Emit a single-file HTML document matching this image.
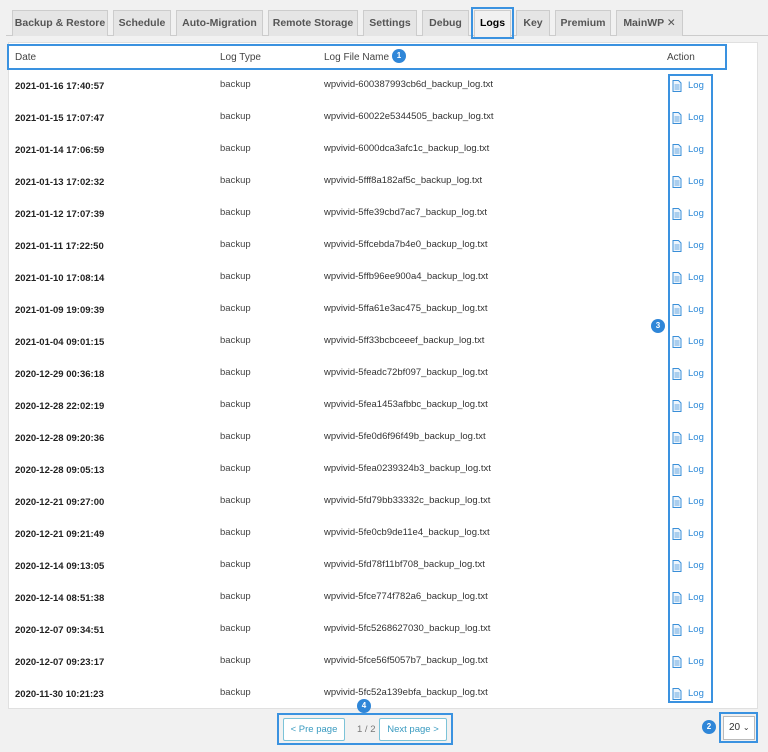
<!DOCTYPE html>
<html><head><meta charset="utf-8"><style>
*{box-sizing:border-box;margin:0;padding:0}
body{width:768px;height:752px;background:#f1f1f1;font-family:"Liberation Sans",sans-serif;position:relative;overflow:hidden;color:#333}
.tabline{position:absolute;left:6px;right:0;top:35px;height:1px;background:#ccc}
.tab{position:absolute;top:10px;height:26px;background:#e5e5e5;border:1px solid #ccc;border-bottom:none;font-size:10.5px;font-weight:bold;color:#555;text-align:center;line-height:25px;white-space:nowrap;overflow:hidden}
.tab.act{background:#f1f1f1;color:#000;height:27px}
.panel{position:absolute;left:8px;top:42px;width:750px;height:667px;background:#fff;border:1px solid #e0e0e0}
.hl{position:absolute;border:2px solid #3a92e0}
.hdr{position:absolute;top:52px;font-size:10px;color:#444}
.row{position:absolute;left:0;width:768px;height:32px;font-size:9.5px}
.row .d{position:absolute;left:15px;top:9px;font-weight:bold;color:#222}
.row .t{position:absolute;left:220px;top:7px;color:#444}
.row .f{position:absolute;left:324px;top:7px;color:#333}
.row .l{position:absolute;left:688px;top:8px;color:#2e8ad8}
.row svg{position:absolute;left:672px;top:8px}
.badge{position:absolute;width:14px;height:14px;border-radius:50%;background:#2f86d8;color:#fff;font-size:8px;font-weight:bold;text-align:center;line-height:14px}
.btn{position:absolute;top:718px;height:23px;border:1px solid #7cc3d8;border-radius:2px;background:#fff;font-size:9.5px;color:#3a9bc0;text-align:center;line-height:21px}
</style></head><body>
<div class="tabline"></div>
<div class="tab" style="left:12px;width:96px">Backup &amp; Restore</div>
<div class="tab" style="left:113px;width:58px">Schedule</div>
<div class="tab" style="left:176px;width:87px">Auto-Migration</div>
<div class="tab" style="left:268px;width:90px">Remote Storage</div>
<div class="tab" style="left:363px;width:54px">Settings</div>
<div class="tab" style="left:422px;width:47px">Debug</div>
<div class="tab act" style="left:474px;width:37px">Logs</div>
<div class="tab" style="left:516px;width:34px">Key</div>
<div class="tab" style="left:555px;width:56px">Premium</div>
<div class="tab" style="left:616px;width:67px">MainWP <span style="font-weight:normal">✕</span></div>
<div class="hl" style="left:471px;top:7px;width:43px;height:32px"></div>
<div class="panel"></div>
<div class="hl" style="left:7px;top:44px;width:720px;height:26px"></div>
<div class="hdr" style="left:15px">Date</div>
<div class="hdr" style="left:220px">Log Type</div>
<div class="hdr" style="left:324px">Log File Name</div>
<div class="hdr" style="left:667px">Action</div>
<div class="badge" style="left:392px;top:49px">1</div>
<div id="rows"></div>
<div class="hl" style="left:668px;top:74px;width:45px;height:629px"></div>
<div class="badge" style="left:651px;top:319px">3</div>
<div class="hl" style="left:277px;top:713px;width:176px;height:32px"></div>
<div class="btn" style="left:283px;width:62px">&lt; Pre page</div>
<div style="position:absolute;left:357px;top:724px;font-size:9.5px;color:#777">1 / 2</div>
<div class="btn" style="left:379px;width:68px">Next page &gt;</div>
<div class="badge" style="left:357px;top:699px">4</div>
<div class="hl" style="left:719px;top:712px;width:39px;height:31px"></div>
<div style="position:absolute;left:723px;top:716px;width:32px;height:24px;border:1px solid #bbb;background:#fff;font-size:10px;line-height:22px;padding-left:5px;color:#333">20 <span style="font-size:8px">⌄</span></div>
<div class="badge" style="left:702px;top:720px">2</div>
<script>
var d=[["2021-01-16 17:40:57","600387993cb6d"],["2021-01-15 17:07:47","60022e5344505"],["2021-01-14 17:06:59","6000dca3afc1c"],["2021-01-13 17:02:32","5fff8a182af5c"],["2021-01-12 17:07:39","5ffe39cbd7ac7"],["2021-01-11 17:22:50","5ffcebda7b4e0"],["2021-01-10 17:08:14","5ffb96ee900a4"],["2021-01-09 19:09:39","5ffa61e3ac475"],["2021-01-04 09:01:15","5ff33bcbceeef"],["2020-12-29 00:36:18","5feadc72bf097"],["2020-12-28 22:02:19","5fea1453afbbc"],["2020-12-28 09:20:36","5fe0d6f96f49b"],["2020-12-28 09:05:13","5fea0239324b3"],["2020-12-21 09:27:00","5fd79bb33332c"],["2020-12-21 09:21:49","5fe0cb9de11e4"],["2020-12-14 09:13:05","5fd78f11bf708"],["2020-12-14 08:51:38","5fce774f782a6"],["2020-12-07 09:34:51","5fc5268627030"],["2020-12-07 09:23:17","5fce56f5057b7"],["2020-11-30 10:21:23","5fc52a139ebfa"]];
var h="";d.forEach(function(r,i){h+='<div class="row" style="top:'+(72+i*32)+'px"><span class="d">'+r[0]+'</span><span class="t">backup</span><span class="f">wpvivid-'+r[1]+'_backup_log.txt</span><svg width="10" height="12" viewBox="0 0 10 12"><path d="M1 .5h5.5l2.5 2.5v8.5h-8z" fill="#eef5fc" stroke="#3a8fd8"/><path d="M2.5 5h5M2.5 7h5M2.5 9h5" stroke="#3a8fd8" stroke-width=".8"/></svg><span class="l">Log</span></div>'});
document.getElementById("rows").innerHTML=h;
</script>
</body></html>
